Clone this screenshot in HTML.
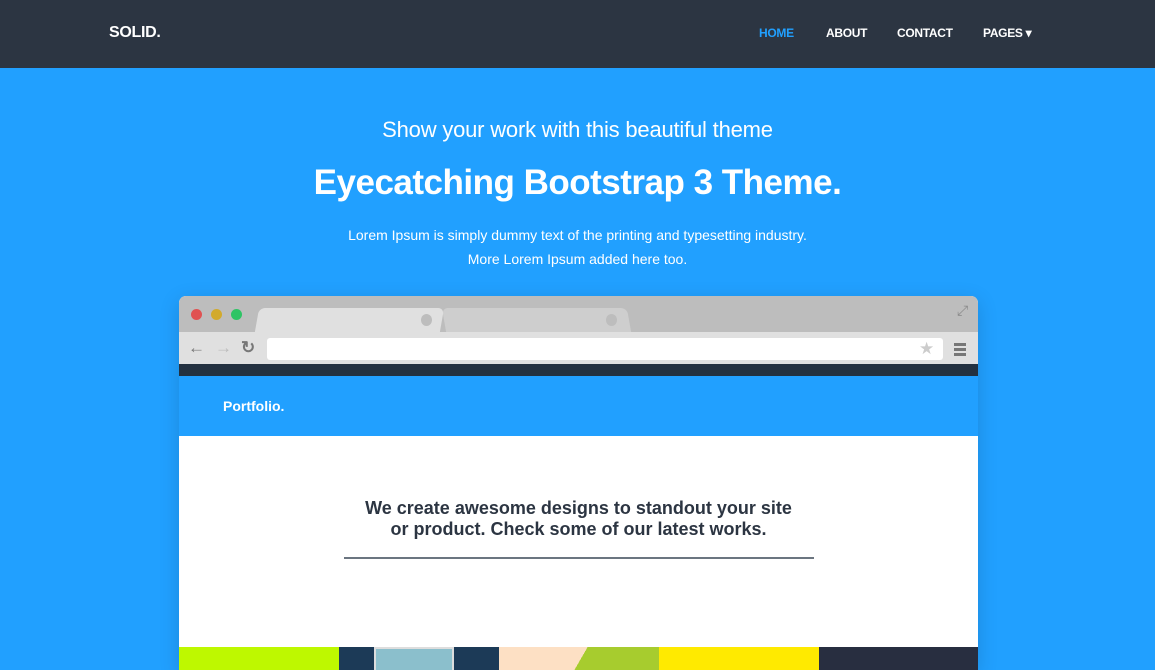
<!DOCTYPE html>
<html><head><style>
*{margin:0;padding:0;box-sizing:border-box}
body{width:1155px;height:670px;overflow:hidden;background:#21a0ff;font-family:"Liberation Sans",sans-serif;position:relative}
.nav{position:absolute;top:0;left:0;width:1155px;height:68px;background:#2c3542}
.logo{position:absolute;left:109px;top:24px;color:#fff;font-weight:900;font-size:16px;letter-spacing:-0.3px}
.nav a{position:absolute;top:26px;color:#fff;font-weight:bold;font-size:12px;text-decoration:none;letter-spacing:-0.3px}
.t1{position:absolute;top:117px;width:100%;text-align:center;color:#fff;font-size:22px;letter-spacing:-0.2px}
.t2{position:absolute;top:163px;width:100%;text-align:center;color:#fff;font-size:35px;font-weight:bold;letter-spacing:-0.5px}
.t3{position:absolute;top:223px;width:100%;text-align:center;color:#fff;font-size:14px;line-height:24px}
.br{position:absolute;left:179px;top:296px;width:799px;height:374px;background:#fff;border-radius:7px 7px 0 0;overflow:hidden;box-shadow:0 5px 20px rgba(0,0,0,.15)}
</style></head><body>
<div class="nav">
<div class="logo">SOLID.</div>
<a style="left:759px;color:#21a0ff">HOME</a>
<a style="left:826px">ABOUT</a>
<a style="left:897px">CONTACT</a>
<a style="left:983px">PAGES ▾</a>
</div>
<div class="t1">Show your work with this beautiful theme</div>
<div class="t2">Eyecatching Bootstrap 3 Theme.</div>
<div class="t3">Lorem Ipsum is simply dummy text of the printing and typesetting industry.<br>More Lorem Ipsum added here too.</div>
<div class="br">
<div style="position:absolute;left:0;top:0;width:799px;height:36px;background:#bdbdbd"></div>
<div style="position:absolute;left:12px;top:13px;width:11px;height:11px;border-radius:50%;background:#e05252"></div>
<div style="position:absolute;left:32px;top:13px;width:11px;height:11px;border-radius:50%;background:#d2aa2c"></div>
<div style="position:absolute;left:52px;top:13px;width:11px;height:11px;border-radius:50%;background:#2ec465"></div>
<div style="position:absolute;left:265px;top:12px;width:185px;height:24px;background:#cecece;border-radius:6px 6px 0 0;transform:skewX(10deg)"></div>
<div style="position:absolute;left:78px;top:12px;width:185px;height:24px;background:#e0e0e0;border-radius:6px 6px 0 0;transform:skewX(-10deg)"></div>
<div style="position:absolute;left:242px;top:18px;width:11px;height:12px;border-radius:50%;background:#bdbdbd"></div>
<div style="position:absolute;left:427px;top:18px;width:11px;height:12px;border-radius:50%;background:#bdbdbd"></div>
<div style="position:absolute;left:778px;top:6px;color:#888;font-size:14px">⤢</div>
<div style="position:absolute;left:0;top:36px;width:799px;height:32px;background:#e0e0e0"></div>
<div style="position:absolute;left:9px;top:42px;color:#777;font-size:17px;font-weight:bold">←</div>
<div style="position:absolute;left:36px;top:42px;color:#bbb;font-size:17px;font-weight:bold">→</div>
<div style="position:absolute;left:62px;top:42px;color:#777;font-size:17px;font-weight:bold">↻</div>
<div style="position:absolute;left:88px;top:42px;width:676px;height:22px;background:#fff;border-radius:3px"></div>
<div style="position:absolute;left:740px;top:43px;color:#ccc;font-size:17px">★</div>
<div style="position:absolute;left:775px;top:47px;width:12px;height:3px;background:#777;box-shadow:0 5px 0 #777,0 10px 0 #777"></div>
<div style="position:absolute;left:0;top:68px;width:799px;height:12px;background:#233140"></div>
<div style="position:absolute;left:0;top:80px;width:799px;height:60px;background:#21a0ff"></div>
<div style="position:absolute;left:44px;top:102px;color:#fff;font-weight:bold;font-size:14px">Portfolio.</div>
<div style="position:absolute;left:0;top:202px;width:799px;text-align:center;color:#2c3542;font-weight:bold;font-size:18px;line-height:21px">We create awesome designs to standout your site<br>or product. Check some of our latest works.</div>
<div style="position:absolute;left:165px;top:261px;width:470px;height:2px;background:#6b7580"></div>
<div style="position:absolute;left:0;top:351px;width:160px;height:30px;background:#bef800"></div>
<div style="position:absolute;left:160px;top:351px;width:160px;height:30px;background:#1c3a57"></div>
<div style="position:absolute;left:195px;top:351px;width:80px;height:30px;background:#8bbfcc;border:2px solid #ddd"></div>
<div style="position:absolute;left:320px;top:351px;width:160px;height:30px;background:linear-gradient(120deg,#fde0c4 50%,#a7cc2e 50%)"></div>
<div style="position:absolute;left:480px;top:351px;width:160px;height:30px;background:#ffea00"></div>
<div style="position:absolute;left:640px;top:351px;width:159px;height:30px;background:#282e40"></div>
</div>
</body></html>
